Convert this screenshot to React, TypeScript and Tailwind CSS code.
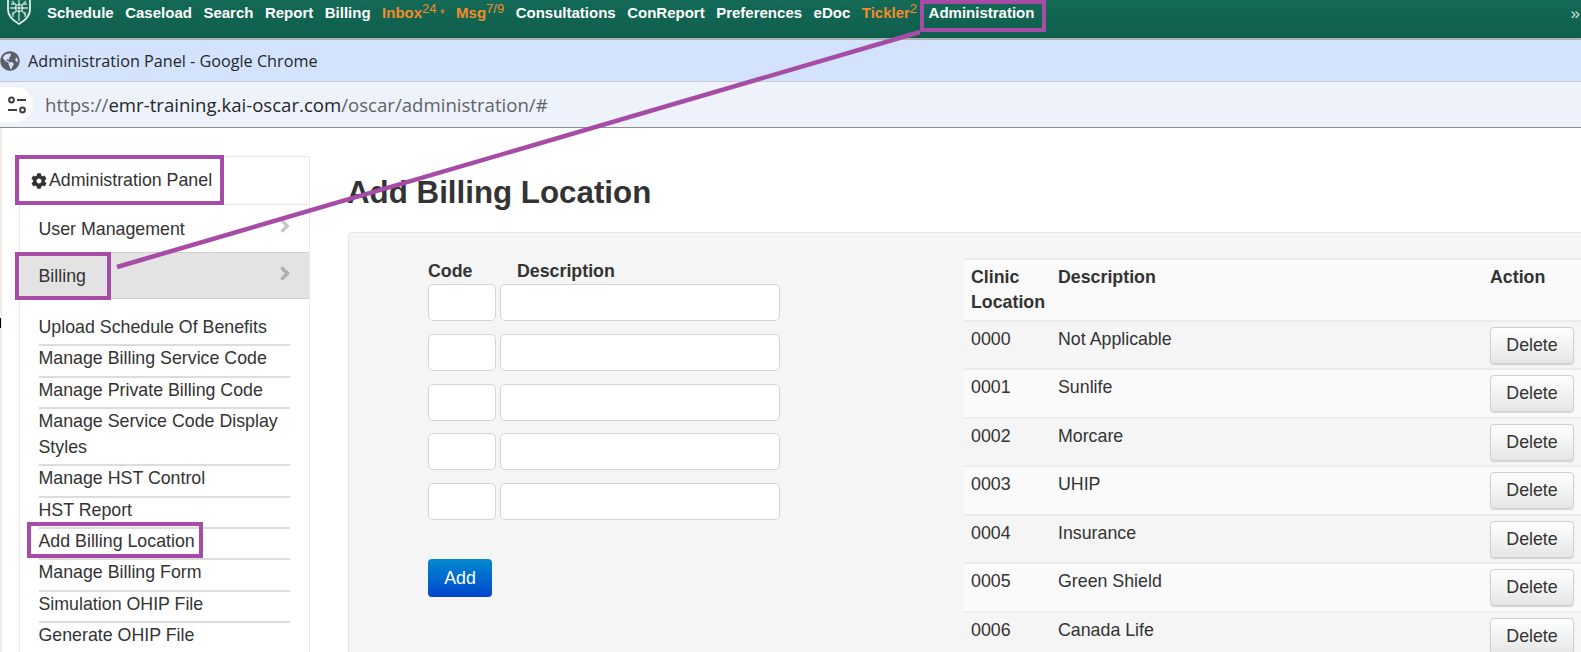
import React from 'react';
import { FaCog, FaChevronRight, FaGlobeAmericas } from 'react-icons/fa';

const navItems = [
  { label: 'Schedule' },
  { label: 'Caseload' },
  { label: 'Search' },
  { label: 'Report' },
  { label: 'Billing' },
  { label: 'Inbox', sup: '24', extra: ' *', alert: true },
  { label: 'Msg', sup: '7/9', alert: true },
  { label: 'Consultations' },
  { label: 'ConReport' },
  { label: 'Preferences' },
  { label: 'eDoc' },
  { label: 'Tickler', sup: '2', alert: true },
  { label: 'Administration' },
];

const billingLinks = [
  'Upload Schedule Of Benefits',
  'Manage Billing Service Code',
  'Manage Private Billing Code',
  'Manage Service Code Display Styles',
  'Manage HST Control',
  'HST Report',
  'Add Billing Location',
  'Manage Billing Form',
  'Simulation OHIP File',
  'Generate OHIP File',
];

const locations = [
  ['0000', 'Not Applicable'],
  ['0001', 'Sunlife'],
  ['0002', 'Morcare'],
  ['0003', 'UHIP'],
  ['0004', 'Insurance'],
  ['0005', 'Green Shield'],
  ['0006', 'Canada Life'],
];

const Shield = () => (
  <svg width="26" height="25" viewBox="0 0 26 25" fill="none" className="shrink-0">
    <path d="M2 -4 H24 V10 C24 17 18 21 13 24 C8 21 2 17 2 10 Z" stroke="#e4ede9" strokeWidth="1.8" />
    <path d="M13 -2 V21 M4 8 H22 M6 1 L10 5 M20 1 L16 5 M6 15 L10 11 M20 15 L16 11 M5 4 H9 M17 4 H21 M7 12 V17 M19 12 V17" stroke="#c5d9d2" strokeWidth="1.3" />
    <circle cx="13" cy="8" r="3.5" stroke="#e4ede9" strokeWidth="1.2" />
  </svg>
);

const TuneIcon = () => (
  <svg width="22" height="22" viewBox="0 0 22 22" fill="none" stroke="#3c4043" strokeWidth="2">
    <circle cx="5.5" cy="6" r="2.4" />
    <path d="M11 6 H20" />
    <path d="M2 16 H11" />
    <circle cx="16.5" cy="16" r="2.4" />
  </svg>
);

const TopNav = () => (
  <nav className="flex h-[38px] items-start bg-gradient-to-b from-[#136a57] to-[#0f5e4c] pl-[6px] font-['Liberation_Sans',sans-serif] text-[15px] font-bold text-white">
    <Shield />
    <div className="ml-[15px] flex gap-[11.5px] pt-[4px] leading-[18px] whitespace-pre">
      {navItems.map((item) => (
        <span key={item.label} className={item.alert ? 'text-[#f28c28]' : ''}>
          {item.label}
          {item.sup && <sup className="top-[-5px] align-baseline text-[13px] font-normal">{item.sup}</sup>}
          {item.extra && <span className="text-[12px] font-normal">{item.extra}</span>}
        </span>
      ))}
    </div>
    <span className="ml-auto pr-[1px] pt-[1px] text-[17px] font-normal text-[#cfe0da]">»</span>
  </nav>
);

const BrowserChrome = () => (
  <div className="font-['Open_Sans',sans-serif]">
    <div className="flex h-[43px] items-center gap-[8px] border-t-2 border-t-[#a9b4b0] bg-[#d3e3fd] pt-[1px] text-[16.2px] text-[#24272b]">
      <FaGlobeAmericas className="h-[20px] w-[20px] text-[#5b5e63]" />
      <span>Administration Panel - Google Chrome</span>
    </div>
    <div className="flex h-[47px] items-center gap-[12px] border-y border-t-[#c9ccd2] border-b-[#8d8d8d] bg-[#edf2fb] text-[18.6px] text-[#5f6368]">
      <div className="flex h-[35px] w-[33px] items-center justify-center rounded-r-full bg-white">
        <TuneIcon />
      </div>
      <span>
        https://<span className="text-[#24272b]">emr-training.kai-oscar.com</span>/oscar/administration/#
      </span>
    </div>
  </div>
);

const Sidebar = () => (
  <aside className="ml-[16.5px] mt-[28px] w-[291px] shrink-0 border-x border-[#e8e8e8] text-[17.8px] text-[#333]">
    <div className="flex h-[49px] items-center gap-[2.5px] rounded-t-[4px] border-y border-[#e5e5e5] pl-[11px]">
      <FaCog className="h-[16px] w-[16px] text-[#333]" />
      <span>Administration Panel</span>
    </div>
    <div className="flex h-[47px] items-center justify-between pl-[19px] pr-[19px] pt-[1px]">
      <span>User Management</span>
      <FaChevronRight stroke="currentColor" strokeWidth={40} className="mb-[6px] h-[14px] w-[10px] text-[#c8c8c8]" />
    </div>
    <div className="flex h-[47px] items-center justify-between border-y border-[#cfcfcf] bg-[#e3e3e3] pl-[19px] pr-[19px] pt-[1px]">
      <span>Billing</span>
      <FaChevronRight stroke="currentColor" strokeWidth={40} className="mb-[6px] h-[15px] w-[10px] text-[#b0b0b0]" />
    </div>
    <ul className="mt-[16px] px-[19px] leading-[25.7px]">
      {billingLinks.map((link) => (
        <li key={link} className="border-b-2 border-[#dcdcdc] pb-[3.7px]">
          {link}
        </li>
      ))}
    </ul>
  </aside>
);

const BillingForm = () => (
  <div className="ml-[79px] w-[354px] shrink-0 pt-[25px]">
    <div className="flex text-[17.8px] font-bold leading-[26px] text-[#333]">
      <span className="w-[89px]">Code</span>
      <span>Description</span>
    </div>
    <div className="flex flex-col gap-[12.8px]">
      {[0, 1, 2, 3, 4].map((row) => (
        <div key={row} className="flex gap-[4px]">
          <input className="h-[37px] w-[68px] rounded-[5px] border-[1.5px] border-[#d5d5d5] bg-white" />
          <input className="h-[37px] w-[280px] rounded-[5px] border-[1.5px] border-[#d5d5d5] bg-white" />
        </div>
      ))}
    </div>
    <button className="mt-[39px] h-[38px] w-[64px] rounded-[4px] bg-gradient-to-b from-[#0a88cf] to-[#0044cc] text-[17.8px] text-white">
      Add
    </button>
  </div>
);

const LocationTable = () => (
  <div className="ml-[182px] mt-[25px] min-w-0 flex-1 text-[17.8px] leading-[25px] text-[#333]">
    <div className="flex h-[63.5px] border-y-2 border-y-[#ececec] bg-[#fafafa] pt-[5px] font-bold">
      <span className="w-[94px] pl-[7px]">Clinic Location</span>
      <span className="w-[432px]">Description</span>
      <span>Action</span>
    </div>
    {locations.map(([code, name], idx) => (
      <div
        key={code}
        className={`flex h-[48.5px] border-b-2 border-[#ececec] pt-[5px] ${idx % 2 === 0 ? 'bg-[#f5f5f5]' : 'bg-[#fafafa]'}`}
      >
        <span className="w-[94px] pl-[7px]">{code}</span>
        <span className="w-[432px]">{name}</span>
        <button className="h-[37px] w-[84px] rounded-[4px] border border-[#d0d0d0] bg-gradient-to-b from-white to-[#e6e6e6] text-[#333] shadow-[0_1px_1px_rgba(0,0,0,0.15)]">
          Delete
        </button>
      </div>
    ))}
  </div>
);

const Annotations = () => (
  <div className="pointer-events-none absolute inset-0">
    <svg width="1581" height="652" className="absolute inset-0">
      <line x1="920" y1="32" x2="117" y2="267" stroke="#a64ca6" strokeWidth="4.5" />
    </svg>
    <div className="absolute left-[920px] top-0 h-[32px] w-[126px] border-[4px] border-[#a64ca6]" />
    <div className="absolute left-[15px] top-[155px] h-[50px] w-[209px] border-[4px] border-[#a64ca6]" />
    <div className="absolute left-[15px] top-[252px] h-[48px] w-[96px] border-[4px] border-[#a64ca6]" />
    <div className="absolute left-[27px] top-[522px] h-[36px] w-[176px] border-[4px] border-[#a64ca6]" />
    <div className="absolute left-0 top-[318px] h-[10px] w-[1px] bg-black" />
  </div>
);

export default function App() {
  return (
    <div className="relative h-[652px] w-full overflow-hidden bg-white font-['Liberation_Sans',sans-serif]">
      <TopNav />
      <BrowserChrome />
      <div className="flex border-l-2 border-[#f3ebe6]">
        <Sidebar />
        <main className="ml-[37.5px] min-w-0 flex-1">
          <h1 className="mt-[45px] text-[31.3px] font-bold leading-[40px] text-[#333]">Add Billing Location</h1>
          <div className="ml-[1px] mr-[-10px] mt-[19px] flex h-[500px] rounded-[4px] border border-[#e6e6e6] bg-[#f5f5f5]">
            <BillingForm />
            <LocationTable />
          </div>
        </main>
      </div>
      <Annotations />
    </div>
  );
}
